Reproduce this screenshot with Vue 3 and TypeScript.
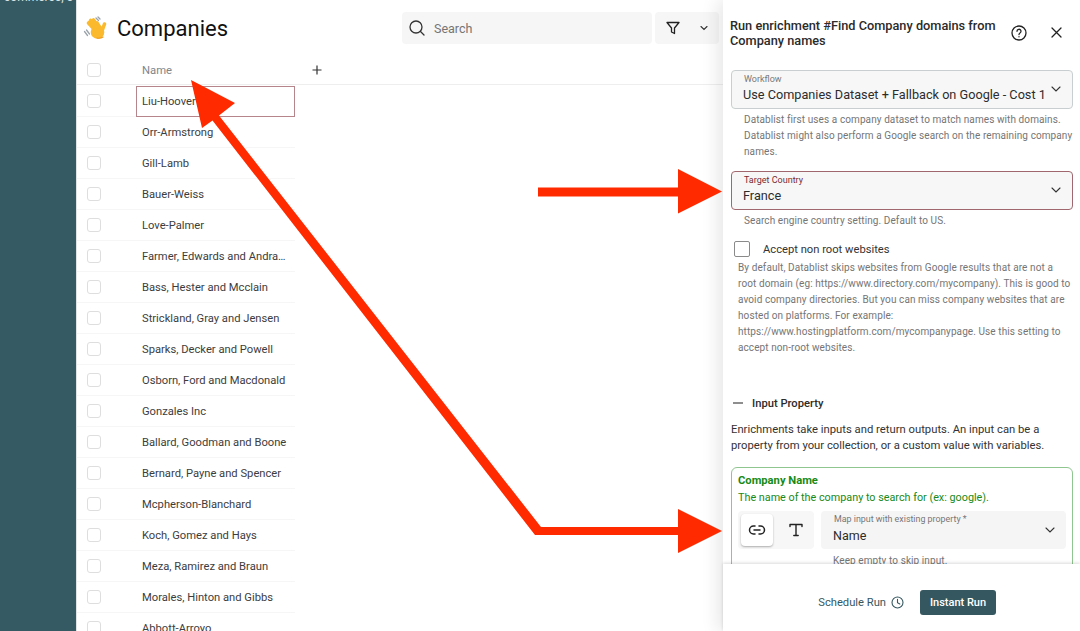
<script setup lang="ts">
const rows: string[] = [
  'Liu-Hoover', 'Orr-Armstrong', 'Gill-Lamb', 'Bauer-Weiss', 'Love-Palmer',
  'Farmer, Edwards and Andrade', 'Bass, Hester and Mcclain', 'Strickland, Gray and Jensen',
  'Sparks, Decker and Powell', 'Osborn, Ford and Macdonald', 'Gonzales Inc',
  'Ballard, Goodman and Boone', 'Bernard, Payne and Spencer', 'Mcpherson-Blanchard',
  'Koch, Gomez and Hays', 'Meza, Ramirez and Braun', 'Morales, Hinton and Gibbs', 'Abbott-Arroyo',
]
</script>

<template>
  <div class="app">
    <aside class="sidebar"><span class="sliver">commerce, o c</span></aside>

    <main class="main">
      <header class="topbar">
        <div class="title">
          <svg class="wave" width="24" height="24" viewBox="0 0 24 24" fill="none" stroke-linecap="round">
            <path d="M1.500 15.500l3 4M3.500 14l3 4M13 2l2.500 2.500M15 1l2 2" stroke="#9aa3ab" stroke-width="1.300" />
            <g stroke="#fbb92d" stroke-width="3.600">
              <path d="M12 14L5.500 7M14 12L7.500 4.500M16 11L10.500 4M18 13L14 7M19 15l2.500-7" />
            </g>
            <circle cx="14.500" cy="16" r="6.800" fill="#fbb92d" />
            <path d="M20 21c-1.500 1-3.500 1.600-6 1" stroke="#f09a1a" stroke-width="1.200" />
          </svg>
          <h1>Companies</h1>
        </div>
        <div class="tools">
          <div class="search">
            <svg width="18" height="18" viewBox="0 0 18 18" fill="none" stroke="#333" stroke-width="1.300" stroke-linecap="round">
              <circle cx="8" cy="8" r="6" /><path d="M12.500 12.500L16 16" />
            </svg>
            <span>Search</span>
          </div>
          <div class="filter">
            <svg width="14" height="14" viewBox="0 0 14 14" fill="none" stroke="#222" stroke-width="1.300" stroke-linejoin="round">
              <path d="M1 1.500h12L8.500 7v5.500L5.500 11V7z" />
            </svg>
            <svg width="10" height="10" viewBox="0 0 10 10" fill="none" stroke="#333" stroke-width="1.100" stroke-linecap="round">
              <path d="M2 3.500L5 6.500l3-3" />
            </svg>
          </div>
        </div>
      </header>

      <div class="thead">
        <span class="box" />
        <span class="th">Name</span>
        <svg class="plus" width="10" height="10" viewBox="0 0 10 10" stroke="#333" stroke-width="1.200"><path d="M5 .5v9M.5 5h9" /></svg>
      </div>

      <div class="tbody">
        <div v-for="(name, i) in rows" :key="name" class="row">
          <span class="box" />
          <span class="cell" :class="{ selected: i === 0 }">{{ name }}</span>
        </div>
      </div>
    </main>

    <section class="panel">
      <div class="panel-head">
        <h2>Run enrichment #Find Company domains from Company names</h2>
        <svg class="help" width="16" height="16" viewBox="0 0 16 16" fill="none" stroke="#222" stroke-width="1.300" stroke-linecap="round">
          <circle cx="8" cy="8" r="7" /><path d="M6 6.300a2 2 0 1 1 3 1.700c-.7.400-1 .8-1 1.500" /><path d="M8 11.700v.1" />
        </svg>
        <svg class="close" width="11" height="11" viewBox="0 0 11 11" stroke="#222" stroke-width="1.300" stroke-linecap="round"><path d="M1 1l9 9M10 1l-9 9" /></svg>
      </div>

      <div class="panel-body">
        <div class="field">
          <label>Workflow</label>
          <div class="value">Use Companies Dataset + Fallback on Google - Cost 1</div>
          <svg class="chev" width="10" height="10" viewBox="0 0 10 10" fill="none" stroke="#333" stroke-width="1.100" stroke-linecap="round"><path d="M1 3l4 4 4-4" /></svg>
        </div>
        <p class="hint first">Datablist first uses a company dataset to match names with domains. Datablist might also perform a Google search on the remaining company names.</p>

        <div class="field active">
          <label>Target Country</label>
          <div class="value">France</div>
          <svg class="chev" width="10" height="10" viewBox="0 0 10 10" fill="none" stroke="#333" stroke-width="1.100" stroke-linecap="round"><path d="M1 3l4 4 4-4" /></svg>
        </div>
        <p class="hint">Search engine country setting. Default to US.</p>

        <div class="check">
          <span class="check-box" />
          <span>Accept non root websites</span>
        </div>
        <p class="hint long">By default, Datablist skips websites from Google results that are not a root domain (eg: https://www.directory.com/mycompany). This is good to avoid company directories. But you can miss company websites that are hosted on platforms. For example: https://www.hostingplatform.com/mycompanypage. Use this setting to accept non-root websites.</p>

        <div class="section">
          <svg class="minus" width="10" height="2" viewBox="0 0 10 2"><path d="M0 1h10" stroke="#444" stroke-width="1.200" /></svg>
          <span>Input Property</span>
        </div>
        <p class="intro">Enrichments take inputs and return outputs. An input can be a property from your collection, or a custom value with variables.</p>

        <div class="card">
          <div class="card-title">Company Name</div>
          <div class="card-desc">The name of the company to search for (ex: google).</div>
          <div class="map">
            <div class="toggle">
              <span class="tbtn on">
                <svg width="18" height="18" viewBox="0 0 18 18" fill="none" stroke="#222" stroke-width="1.500" stroke-linecap="round">
                  <path d="M7 5H5.500a4 4 0 0 0 0 8H7M11 5h1.500a4 4 0 0 1 0 8H11M6 9h6" />
                </svg>
              </span>
              <span class="tbtn">
                <svg width="16" height="16" viewBox="0 0 16 16" fill="none" stroke="#222" stroke-width="1.400" stroke-linecap="round" stroke-linejoin="round">
                  <path d="M2 4.500V2.500h12v2M8 2.500v11M5.800 13.500h4.400" />
                </svg>
              </span>
            </div>
            <div class="map-select">
              <label>Map input with existing property *</label>
              <div class="value">Name</div>
              <svg class="chev" width="10" height="10" viewBox="0 0 10 10" fill="none" stroke="#333" stroke-width="1.100" stroke-linecap="round"><path d="M1 3l4 4 4-4" /></svg>
            </div>
          </div>
          <p class="hint keep">Keep empty to skip input.</p>
        </div>
      </div>

      <footer class="panel-foot">
        <span class="schedule">
          Schedule Run
          <svg width="13" height="13" viewBox="0 0 13 13" fill="none" stroke="#35575f" stroke-width="1.100" stroke-linecap="round"><circle cx="6.500" cy="6.500" r="5.500" /><path d="M6.500 3.300v3.400l2.300 1.200" /></svg>
        </span>
        <button class="run" type="button">Instant Run</button>
      </footer>
    </section>

    <svg class="arrows" width="1080" height="631" viewBox="0 0 1080 631" aria-hidden="true">
      <g fill="#ff2a00">
        <path d="M538 187.500h140V169l44 22.500-44 22V196.500H538z" />
        <path d="M191 80l44 23-16 12.500L541 527h137v-18l44 22-44 22v-18H535L212.500 120.500 202 128z" />
      </g>
    </svg>
  </div>
</template>

<style>
html, body { margin: 0; background: #fff; overflow: hidden; }
</style>

<style scoped>
.app {
  position: relative;
  display: flex;
  width: 1080px;
  height: 631px;
  overflow: hidden;
  font-family: Roboto, "Liberation Sans", sans-serif;
  color: #222;
}
.sidebar {
  flex: 0 0 76px;
  background: #365a63;
  overflow: hidden;
  border-right: 1px solid #dfe3e4;
}
.sliver {
  display: block;
  margin-top: -9px;
  padding-left: 4px;
  font-size: 12px;
  line-height: 12px;
  color: #d9e2e4;
  white-space: nowrap;
}
.main { flex: 0 0 646px; display: flex; flex-direction: column; min-width: 0; height: 631px; overflow: hidden; }
.topbar { flex: none; display: flex; height: 55px; padding-top: 12px; box-sizing: border-box; }
.title { display: flex; align-items: center; height: 32px; padding-left: 6px; width: 325px; box-sizing: border-box; }
.wave { flex: none; }
h1 { margin: 0 0 0 10px; font-size: 22px; font-weight: 400; color: #111; }
.tools { display: flex; gap: 3px; }
.search {
  display: flex; align-items: center; gap: 8px;
  width: 250px; height: 32px; padding-left: 6px; box-sizing: border-box;
  background: #f6f6f6; border-radius: 4px;
  font-size: 12.500px; color: #757575;
}
.filter {
  display: flex; align-items: center; gap: 19px;
  width: 64px; height: 32px; padding-left: 11px; box-sizing: border-box;
  background: #f6f6f6; border-radius: 4px;
}
.thead { flex: none; display: flex; align-items: center; height: 30px; box-sizing: border-box; padding-left: 10px; border-bottom: 1px solid #eeeeee; }
.th { width: 170px; margin-left: 41px; padding-top: 1px; font-size: 11.250px; color: #80868b; }
.box { flex: none; width: 12px; height: 12px; border: 1.500px solid #dedede; border-radius: 3px; background: #fff; }
.tbody { flex: none; display: flex; flex-direction: column; padding-top: 1px; }
.row { flex: none; display: flex; align-items: center; width: 218px; height: 31px; box-sizing: border-box; padding-left: 10px; border-bottom: 1px solid #f6f6f6; }
.cell {
  display: block; flex: none; width: 159px; height: 31px; margin-left: 35px; padding: 0 6px;
  box-sizing: border-box; font-size: 11.200px; line-height: 31px; color: #3d3d3d;
  overflow: hidden; text-overflow: ellipsis; white-space: nowrap;
}
.selected { border: 1px solid #b5858b; line-height: 29px; padding: 0 5px; }
.panel {
  flex: 0 0 357px; min-width: 0; display: flex; flex-direction: column; position: relative; background: #fff;
  box-shadow: -6px 0 16px rgba(0, 0, 0, .09);
}
.panel-head { flex: none; display: flex; height: 70px; padding: 18px 0 0 7px; box-sizing: border-box; }
h2 { width: 275px; margin: 0; font-size: 12.750px; line-height: 15px; font-weight: 500; color: #2b2b2b; }
.help { margin: 7px 0 0 6px; flex: none; }
.close { margin: 9px 0 0 24px; flex: none; }
.panel-body { flex: 1; min-height: 0; overflow: hidden; padding: 0 7px 0 8px; }
.field {
  position: relative; height: 39px; box-sizing: border-box; padding: 2px 11px;
  background: #f7f7f7; border: 1px solid #c9cfd0; border-radius: 4px;
}
.field.active { border-color: #a0686e; }
.field.active label { color: #7a2a30; }
label { display: block; font-size: 9px; line-height: 12px; color: #777; padding-left: 1px; }
.value { font-size: 12.700px; line-height: 19px; color: #2c2c2c; white-space: nowrap; }
.chev { position: absolute; right: 11px; top: 13px; }
.hint { margin: 3px 0 0; padding-left: 13px; font-size: 10px; line-height: 16px; letter-spacing: .09px; color: #757575; }
.hint.first { margin: 3px -3px 11px 0; }
.check { display: flex; align-items: center; gap: 13px; height: 16px; margin: 12px 0 0 3px; font-size: 11.200px; color: #333; }
.check-box { flex: none; width: 14px; height: 14px; border: 1px solid #8a8a8a; border-radius: 2px; }
.hint.long { margin-top: 3px; padding-left: 7px; }
.section { display: flex; align-items: center; gap: 9px; height: 16px; margin: 39px 0 0 2px; font-size: 11.200px; font-weight: 500; color: #2b2b2b; }
.minus { flex: none; }
.intro { margin: 11px 0 0; font-size: 11.280px; line-height: 16px; color: #333; }
.card { margin-top: 13px; padding: 5px 6px 10px; border: 1px solid #8fc58f; border-radius: 6px; }
.card-title { font-size: 11.200px; line-height: 16px; font-weight: 700; color: #178a17; }
.card-desc { margin-top: 1px; font-size: 10.800px; line-height: 16px; color: #178a17; }
.map { display: flex; gap: 7px; margin-top: 5px; }
.toggle { display: flex; align-items: center; gap: 7px; width: 76px; height: 38px; padding: 0 3px; box-sizing: border-box; background: #f7f7f7; border-radius: 4px; }
.tbtn { flex: none; display: flex; align-items: center; justify-content: center; width: 32px; height: 32px; border-radius: 4px; }
.tbtn.on { background: #fff; box-shadow: 0 1px 2px rgba(0, 0, 0, .3); }
.map-select { position: relative; flex: 1; height: 38px; padding: 2px 12px; box-sizing: border-box; background: #f5f5f5; border-radius: 4px; }
.map-select .value { margin-top: 1px; font-size: 12.500px; }
.map-select label { font-size: 8.900px; }
.map-select .chev { top: 14px; }
.hint.keep { margin-top: 4px; padding-left: 95px; }
.panel-foot {
  position: relative; display: flex; align-items: center; justify-content: flex-end;
  flex: 0 0 67px; box-sizing: border-box; padding: 9px 84px 0 0; background: #fff;
  box-shadow: 0 -1px 3px rgba(0, 0, 0, .15);
}
.schedule { display: flex; align-items: center; gap: 5px; margin-right: 16px; font-size: 11.200px; color: #35575f; }
.run {
  width: 76px; height: 25px; padding: 0; border: 0; border-radius: 3px;
  background: #35575f; color: #fff; font: 500 11px Roboto, "Liberation Sans", sans-serif;
}
.arrows { position: absolute; left: 0; top: 0; pointer-events: none; }
</style>
